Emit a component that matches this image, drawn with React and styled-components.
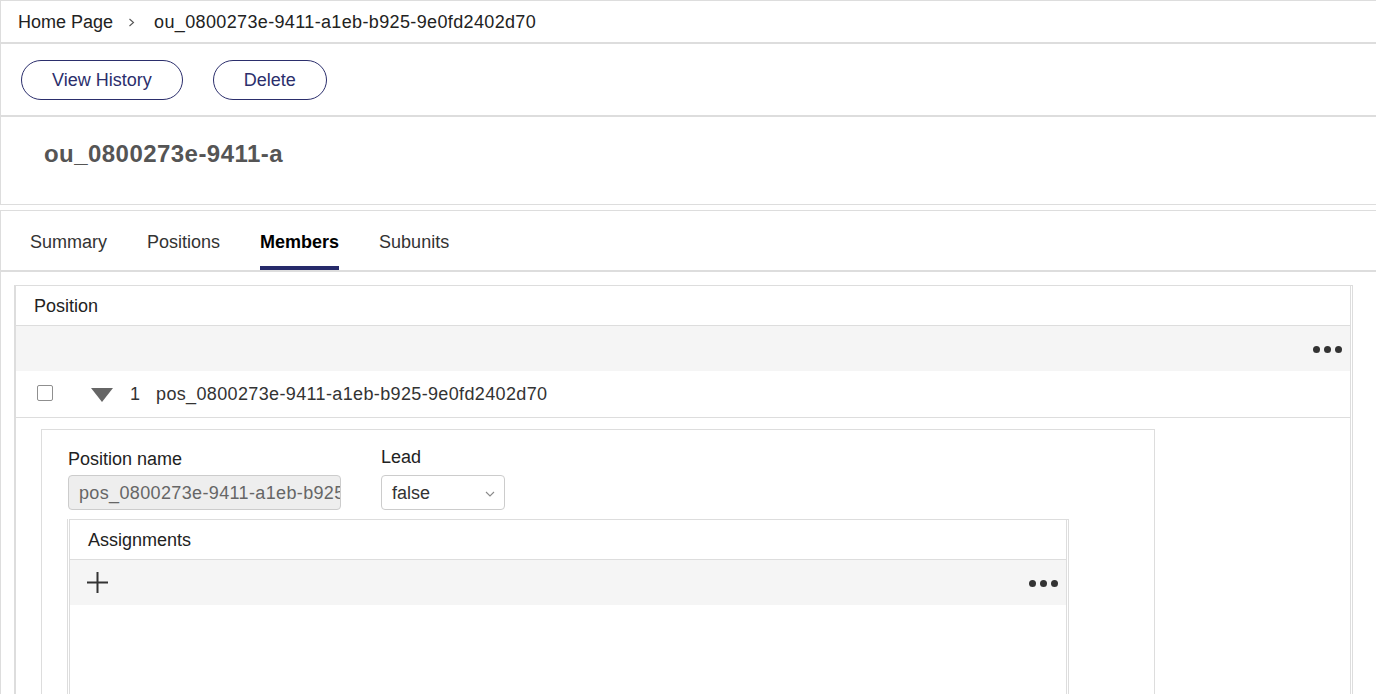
import React from "react";
import styled, { createGlobalStyle } from "styled-components";

const GlobalStyle = createGlobalStyle`
  html, body {
    margin: 0;
    padding: 0;
    background: #fff;
    overflow: hidden;
  }
  body {
    font-family: "Liberation Sans", Arial, sans-serif;
    font-size: 18px;
    color: #222;
  }
  * { box-sizing: border-box; }
`;

const LINE = "#dddddd";
const NAVY = "#2b2e6c";

const Page = styled.div`
  display: flex;
  flex-direction: column;
  width: 1376px;
  height: 694px;
  overflow: hidden;
  & > * {
    flex-shrink: 0;
  }
`;

const Breadcrumb = styled.nav`
  display: flex;
  align-items: center;
  height: 44px;
  padding: 2px 0 0 17px;
  border-top: 1px solid ${LINE};
  border-left: 1px solid ${LINE};
  border-bottom: 2px solid ${LINE};
  color: #222;
`;

const Crumb = styled.span`
  line-height: 21px;
  letter-spacing: ${(p) => (p.$id ? "0.36px" : "0")};
`;

const CrumbSep = styled.span`
  display: inline-flex;
  margin: 0 19px 0 15px;
  color: #555;
`;

const ActionBar = styled.div`
  display: flex;
  align-items: flex-start;
  gap: 30px;
  height: 73px;
  padding: 16px 0 0 20px;
  border-left: 1px solid ${LINE};
  border-bottom: 2px solid ${LINE};
`;

const PillButton = styled.button`
  height: 40px;
  padding: 1px 30px 0;
  border: 1px solid ${NAVY};
  border-radius: 20px;
  background: #fff;
  color: ${NAVY};
  font-family: inherit;
  font-size: 18px;
  line-height: 21px;
  cursor: pointer;
`;

const TitleCard = styled.section`
  height: 88px;
  padding: 23px 0 0 43px;
  border-left: 1px solid ${LINE};
  border-bottom: 1px solid ${LINE};
`;

const Title = styled.h1`
  margin: 0;
  font-size: 24px;
  line-height: 28px;
  font-weight: 700;
  letter-spacing: 0.45px;
  color: #555;
`;

const TabBar = styled.div`
  display: flex;
  margin-top: 5px;
  height: 62px;
  padding-left: 29px;
  border-top: 1px solid ${LINE};
  border-left: 1px solid ${LINE};
  border-bottom: 2px solid ${LINE};
`;

const Tab = styled.div`
  height: 59px;
  margin-right: 40px;
  padding-top: 21px;
  line-height: 21px;
  font-size: 18px;
  font-weight: ${(p) => (p.$active ? 700 : 400)};
  color: ${(p) => (p.$active ? "#000" : "#333")};
  border-bottom: 4px solid ${(p) => (p.$active ? "#262a6a" : "transparent")};
`;

const Content = styled.div`
  flex: 1;
  padding: 13px 23px 0 13px;
  border-left: 1px solid ${LINE};
`;

const Panel = styled.div`
  border-top: 1px solid ${LINE};
  border-left: 2px solid ${LINE};
  border-right: 3px double ${LINE};
`;

const PanelHeader = styled.div`
  display: flex;
  align-items: center;
  height: 40px;
  padding: 2px 0 0 18px;
  border-bottom: 1px solid ${LINE};
  color: #222;
  line-height: 21px;
`;

const Toolbar = styled.div`
  display: flex;
  align-items: center;
  justify-content: space-between;
  height: 45px;
  padding: 0 8px 0 ${(p) => p.$padLeft || 18}px;
  background: #f5f5f5;
`;

const IconSlot = styled.span`
  display: inline-flex;
  align-items: center;
  color: #333;
  margin-top: ${(p) => p.$dy || 0}px;
`;

const Row = styled.div`
  display: flex;
  align-items: center;
  height: 47px;
  padding: 1px 0 0 21px;
  border-bottom: 1px solid ${LINE};
  color: #333;
`;

const CheckBox = styled.span`
  display: inline-block;
  width: 16px;
  height: 16px;
  border: 1px solid #8f8f8f;
  border-radius: 2px;
  background: #fff;
  margin-top: -3px;
`;

const Caret = styled.span`
  display: inline-flex;
  margin-left: 38px;
  color: #666;
`;

const RowIndex = styled.span`
  margin-left: 17px;
  line-height: 21px;
`;

const RowText = styled.span`
  margin-left: 16px;
  line-height: 21px;
  letter-spacing: 0.36px;
`;

const DetailArea = styled.div`
  padding: 11px 0 0 25px;
`;

const DetailCard = styled.div`
  width: 1114px;
  padding: 19px 0 0 26px;
  border: 1px solid ${LINE};
`;

const FieldRow = styled.div`
  display: flex;
  gap: 40px;
`;

const Field = styled.div`
  display: flex;
  flex-direction: column;
  gap: 5px;
`;

const Label = styled.label`
  line-height: 21px;
  color: #222;
  margin-top: ${(p) => p.$dy || 0}px;
  margin-bottom: ${(p) => -(p.$dy || 0)}px;
`;

const TextInput = styled.div`
  width: 273px;
  height: 35px;
  padding: 1px 10px 0;
  display: flex;
  align-items: center;
  overflow: hidden;
  white-space: nowrap;
  text-overflow: clip;
  background: #eeeeee;
  border: 1px solid #cccccc;
  border-radius: 4px;
  color: #666;
  font-size: 18px;
  letter-spacing: 0.36px;
`;

const SelectBox = styled.div`
  width: 124px;
  height: 35px;
  padding: 2px 9px 0 10px;
  display: flex;
  align-items: center;
  justify-content: space-between;
  background: #fff;
  border: 1px solid #cccccc;
  border-radius: 4px;
  color: #333;
  font-size: 18px;
`;

const SubPanel = styled.div`
  width: 1002px;
  margin: 9px 0 0 -1px;
  border-top: 1px solid ${LINE};
  border-left: 3px double ${LINE};
  border-right: 3px double ${LINE};
`;

const SubBody = styled.div`
  height: 200px;
  background: #fff;
`;

const Chevron = () => (
  <svg width="7" height="11" viewBox="0 0 7 11" fill="none">
    <path d="M1.5 2l4 3.5-4 3.5" stroke="currentColor" strokeWidth="1.1" />
  </svg>
);

const SmallChevronDown = () => (
  <svg width="10" height="6" viewBox="0 0 10 6" fill="none">
    <path d="M1 1l4 4 4-4" stroke="#8a8a8a" strokeWidth="1.1" />
  </svg>
);

const Ellipsis = () => (
  <svg width="29" height="7" viewBox="0 0 29 7">
    <circle cx="3.5" cy="3.5" r="3.5" fill="currentColor" />
    <circle cx="14.5" cy="3.5" r="3.5" fill="currentColor" />
    <circle cx="25.5" cy="3.5" r="3.5" fill="currentColor" />
  </svg>
);

const Plus = () => (
  <svg width="21" height="21" viewBox="0 0 21 21">
    <path d="M10.5 0v21M0 10.5h21" stroke="currentColor" strokeWidth="2" />
  </svg>
);

const Triangle = () => (
  <svg width="22" height="14" viewBox="0 0 22 14">
    <path d="M0 0h22L11 14z" fill="currentColor" />
  </svg>
);

const tabs = ["Summary", "Positions", "Members", "Subunits"];

export default function App() {
  const id = "ou_0800273e-9411-a1eb-b925-9e0fd2402d70";
  const pos = "pos_0800273e-9411-a1eb-b925-9e0fd2402d70";
  return (
    <>
      <GlobalStyle />
      <Page>
        <Breadcrumb>
          <Crumb>Home Page</Crumb>
          <CrumbSep>
            <Chevron />
          </CrumbSep>
          <Crumb $id>{id}</Crumb>
        </Breadcrumb>

        <ActionBar>
          <PillButton>View History</PillButton>
          <PillButton>Delete</PillButton>
        </ActionBar>

        <TitleCard>
          <Title>ou_0800273e-9411-a</Title>
        </TitleCard>

        <TabBar>
          {tabs.map((t) => (
            <Tab key={t} $active={t === "Members"}>
              {t}
            </Tab>
          ))}
        </TabBar>

        <Content>
          <Panel>
            <PanelHeader>Position</PanelHeader>
            <Toolbar>
              <span />
              <IconSlot $dy={2}>
                <Ellipsis />
              </IconSlot>
            </Toolbar>
            <Row>
              <CheckBox />
              <Caret>
                <Triangle />
              </Caret>
              <RowIndex>1</RowIndex>
              <RowText>{pos}</RowText>
            </Row>
            <DetailArea>
              <DetailCard>
                <FieldRow>
                  <Field>
                    <Label>Position name</Label>
                    <TextInput>{pos}</TextInput>
                  </Field>
                  <Field>
                    <Label $dy={-2}>Lead</Label>
                    <SelectBox>
                      <span>false</span>
                      <SmallChevronDown />
                    </SelectBox>
                  </Field>
                </FieldRow>
                <SubPanel>
                  <PanelHeader>Assignments</PanelHeader>
                  <Toolbar $padLeft={17}>
                    <IconSlot>
                      <Plus />
                    </IconSlot>
                    <IconSlot $dy={2}>
                      <Ellipsis />
                    </IconSlot>
                  </Toolbar>
                  <SubBody />
                </SubPanel>
              </DetailCard>
            </DetailArea>
          </Panel>
        </Content>
      </Page>
    </>
  );
}
